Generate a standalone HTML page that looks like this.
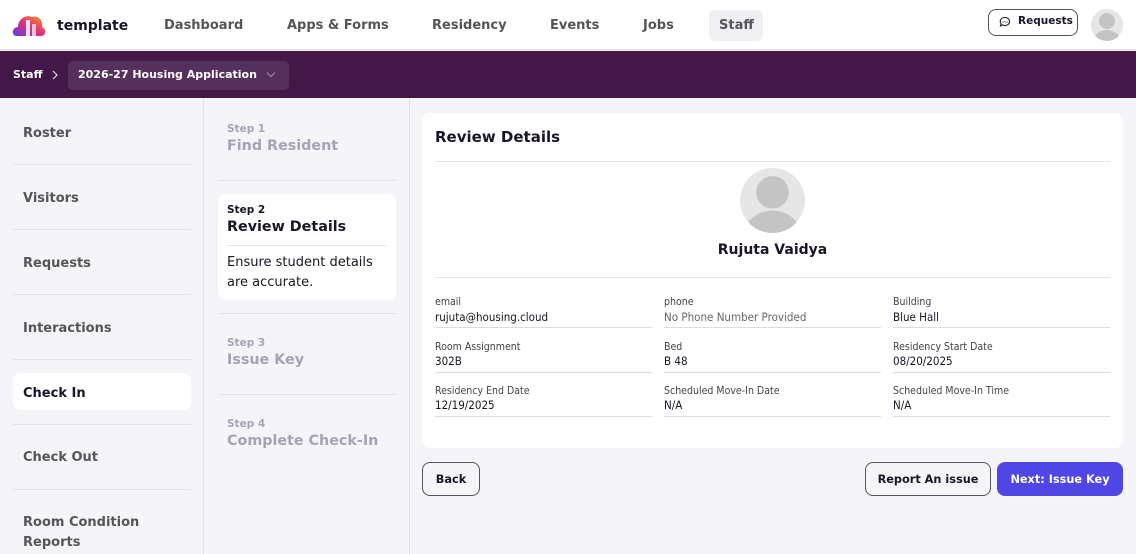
<!DOCTYPE html>
<html><head><meta charset="utf-8"><style>
*{box-sizing:border-box;margin:0;padding:0}
body{width:1136px;height:554px;overflow:hidden;font-family:"DejaVu Sans","Liberation Sans",sans-serif;background:#f4f4f9;position:relative;color:#1c1326}
.a{position:absolute;white-space:nowrap}
.top{left:0;top:0;width:1136px;height:50px;background:#fff;border-bottom:1px solid #ddd}
.nav{top:18px;font-size:13px;font-weight:bold;color:#555}
.bar{left:0;top:51px;width:1136px;height:47px;background:#431848}
.side{left:0;top:98px;width:204px;height:456px;border-right:1px solid #e2e2ea}
.si{left:23px;font-size:13px;font-weight:bold;color:#555}
.sl{left:13px;width:178px;height:1px;background:#e2e2e8}
.steps{left:205px;top:98px;width:205px;height:456px;border-right:1px solid #e2e2ea}
.stl{left:218px;width:178px;height:1px;background:#e2e2e8}
.sn{left:227px;font-size:10.5px;font-weight:bold;color:#a5a3b5}
.st{left:227px;font-size:14.3px;font-weight:bold;color:#a5a3b5}
.lab{font-family:"DejaVu Sans Condensed","DejaVu Sans",sans-serif;font-size:10.5px;color:#444}
.val{font-family:"DejaVu Sans Condensed","DejaVu Sans",sans-serif;font-size:11.5px;color:#1c1326}
.ul{height:1px;width:217px;background:#dcdce4}
.btn{height:34px;border-radius:8px;font-size:11.3px;font-weight:bold;display:flex;align-items:center;justify-content:center}
</style></head><body>
<div class="a top"></div>
<svg class="a" style="left:12px;top:13px" width="34" height="24" viewBox="0 0 34 24">
<defs><linearGradient id="g" x1="0" y1="1" x2="1" y2="0"><stop offset="0" stop-color="#5a3fe0"/><stop offset=".5" stop-color="#e0307a"/><stop offset="1" stop-color="#f5a020"/></linearGradient></defs>
<path d="M4 23 C-1 22 0 14 6 14 C6 6 14 1 20 4 C25 2 32 7 30 14 C35 16 34 23 29 23 Z" fill="url(#g)"/>
<rect x="14" y="7" width="4" height="16" fill="#fff" opacity=".85"/><rect x="20" y="11" width="4" height="12" fill="#fff" opacity=".7"/>
</svg>
<div class="a" style="left:57px;top:18px;font-size:14px;font-weight:bold;color:#1c1326">template</div>
<div class="a nav" style="left:164px">Dashboard</div>
<div class="a nav" style="left:287px">Apps &amp; Forms</div>
<div class="a nav" style="left:432px">Residency</div>
<div class="a nav" style="left:550px">Events</div>
<div class="a nav" style="left:643px">Jobs</div>
<div class="a" style="left:709px;top:10px;width:54px;height:31px;background:#f0f0f4;border-radius:6px"></div>
<div class="a nav" style="left:719px">Staff</div>
<div class="a" style="left:988px;top:9px;width:90px;height:27px;border:1px solid #555;border-radius:8px"></div>
<svg class="a" style="left:999px;top:16px" width="12" height="12" viewBox="0 0 12 12"><path d="M6 1.5a4.5 4 0 1 1-2.5 7.3L1.5 10l.6-2.2A4.5 4 0 0 1 6 1.5z" fill="none" stroke="#222" stroke-width="1.1"/><circle cx="4" cy="6" r=".6" fill="#222"/><circle cx="6" cy="6" r=".6" fill="#222"/><circle cx="8" cy="6" r=".6" fill="#222"/></svg>
<div class="a" style="left:1018px;top:15px;font-size:10.5px;font-weight:bold">Requests</div>
<svg class="a" style="left:1091px;top:9px" width="32" height="32" viewBox="0 0 32 32"><clipPath id="c"><circle cx="16" cy="16" r="16"/></clipPath><g clip-path="url(#c)"><rect width="32" height="32" fill="#e6e6e6"/><circle cx="16" cy="12" r="8" fill="#c4c4c4"/><ellipse cx="16" cy="33" rx="14" ry="12" fill="#c4c4c4"/></g></svg>
<div class="a bar"></div>
<div class="a" style="left:13px;top:68px;font-size:11px;font-weight:bold;color:#fff">Staff</div>
<svg class="a" style="left:51px;top:70px" width="8" height="10" viewBox="0 0 8 10"><path d="M2 1l4 4-4 4" fill="none" stroke="#ddd" stroke-width="1.2"/></svg>
<div class="a" style="left:68px;top:61px;width:221px;height:29px;background:#56305c;border-radius:5px"></div>
<div class="a" style="left:78px;top:68px;font-size:11px;font-weight:bold;color:#fff">2026-27 Housing Application</div>
<svg class="a" style="left:266px;top:71px" width="10" height="7" viewBox="0 0 10 7"><path d="M1 1.5l4 4 4-4" fill="none" stroke="#a890a8" stroke-width="1"/></svg>
<div class="a side"></div>
<div class="a" style="left:13px;top:373px;width:178px;height:37px;background:#fff;border-radius:8px"></div>
<div class="a si" style="top:126px">Roster</div><div class="a sl" style="top:164px"></div>
<div class="a si" style="top:191px">Visitors</div><div class="a sl" style="top:229px"></div>
<div class="a si" style="top:256px">Requests</div><div class="a sl" style="top:294px"></div>
<div class="a si" style="top:321px">Interactions</div><div class="a sl" style="top:359px"></div>
<div class="a si" style="top:386px;color:#1c1326">Check In</div><div class="a sl" style="top:424px"></div>
<div class="a si" style="top:450px">Check Out</div><div class="a sl" style="top:489px"></div>
<div class="a si" style="top:513px;line-height:20px;white-space:normal;width:150px">Room Condition Reports</div>
<div class="a steps"></div>
<div class="a sn" style="top:123px">Step 1</div><div class="a st" style="top:138px">Find Resident</div>
<div class="a stl" style="top:180px"></div>
<div class="a" style="left:218px;top:194px;width:178px;height:106px;background:#fff;border-radius:8px"></div>
<div class="a sn" style="top:204px;color:#1c1326">Step 2</div><div class="a st" style="top:219px;color:#1c1326">Review Details</div>
<div class="a" style="left:227px;top:245px;width:159px;height:1px;background:#e2e2e8"></div>
<div class="a" style="left:227px;top:253px;font-size:13px;line-height:20px;white-space:normal;width:160px">Ensure student details are accurate.</div>
<div class="a stl" style="top:313px"></div>
<div class="a sn" style="top:337px">Step 3</div><div class="a st" style="top:352px">Issue Key</div>
<div class="a stl" style="top:394px"></div>
<div class="a sn" style="top:418px">Step 4</div><div class="a st" style="top:433px">Complete Check-In</div>
<div class="a" style="left:422px;top:113px;width:701px;height:335px;background:#fff;border-radius:8px"></div>
<div class="a" style="left:435px;top:128px;font-size:15px;font-weight:bold">Review Details</div>
<div class="a" style="left:435px;top:161px;width:675px;height:1px;background:#e2e2e8"></div>
<svg class="a" style="left:740px;top:168px" width="65" height="65" viewBox="0 0 32 32"><clipPath id="c2"><circle cx="16" cy="16" r="16"/></clipPath><g clip-path="url(#c2)"><rect width="32" height="32" fill="#e6e6e6"/><circle cx="16" cy="12" r="8" fill="#c4c4c4"/><ellipse cx="16" cy="33" rx="14" ry="12" fill="#c4c4c4"/></g></svg>
<div class="a" style="left:422px;width:701px;text-align:center;top:242px;font-size:14px;font-weight:bold">Rujuta Vaidya</div>
<div class="a" style="left:435px;top:277px;width:675px;height:1px;background:#e2e2e8"></div>

<div class="a lab" style="left:435px;top:296px">email</div><div class="a val" style="left:435px;top:310px">rujuta@housing.cloud</div><div class="a ul" style="left:435px;top:327px"></div>
<div class="a lab" style="left:664px;top:296px">phone</div><div class="a val" style="left:664px;top:310px;color:#666">No Phone Number Provided</div><div class="a ul" style="left:664px;top:327px"></div>
<div class="a lab" style="left:893px;top:296px">Building</div><div class="a val" style="left:893px;top:310px">Blue Hall</div><div class="a ul" style="left:893px;top:327px"></div>
<div class="a lab" style="left:435px;top:341px">Room Assignment</div><div class="a val" style="left:435px;top:354px">302B</div><div class="a ul" style="left:435px;top:372px"></div>
<div class="a lab" style="left:664px;top:341px">Bed</div><div class="a val" style="left:664px;top:354px">B 48</div><div class="a ul" style="left:664px;top:372px"></div>
<div class="a lab" style="left:893px;top:341px">Residency Start Date</div><div class="a val" style="left:893px;top:354px">08/20/2025</div><div class="a ul" style="left:893px;top:372px"></div>
<div class="a lab" style="left:435px;top:385px">Residency End Date</div><div class="a val" style="left:435px;top:398px">12/19/2025</div><div class="a ul" style="left:435px;top:416px"></div>
<div class="a lab" style="left:664px;top:385px">Scheduled Move-In Date</div><div class="a val" style="left:664px;top:398px">N/A</div><div class="a ul" style="left:664px;top:416px"></div>
<div class="a lab" style="left:893px;top:385px">Scheduled Move-In Time</div><div class="a val" style="left:893px;top:398px">N/A</div><div class="a ul" style="left:893px;top:416px"></div>

<div class="a btn" style="left:422px;top:462px;width:58px;border:1px solid #555">Back</div>
<div class="a btn" style="left:865px;top:462px;width:126px;border:1px solid #555">Report An issue</div>
<div class="a btn" style="left:997px;top:462px;width:126px;background:#4f46e5;color:#fff">Next: Issue Key</div>
</body></html>
